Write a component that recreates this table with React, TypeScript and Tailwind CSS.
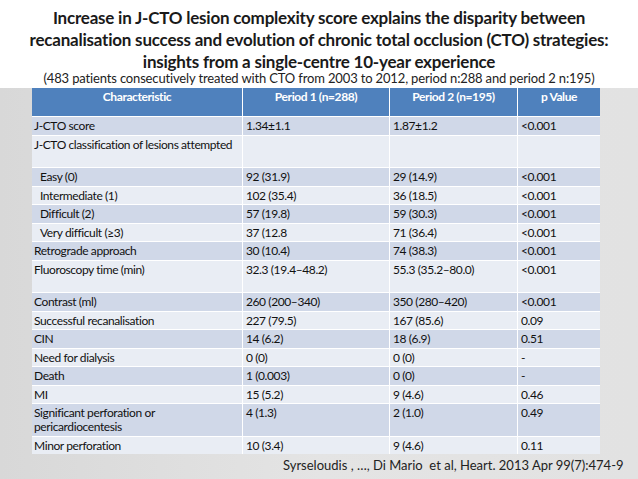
const rows: { label: string; p1: string; p2: string; p: string; indent?: boolean; tall?: boolean }[] = [
  { label: 'J-CTO score', p1: '1.34±1.1', p2: '1.87±1.2', p: '<0.001' },
  { label: 'J-CTO classification of lesions attempted', p1: '', p2: '', p: '', tall: true },
  { label: 'Easy (0)', p1: '92 (31.9)', p2: '29 (14.9)', p: '<0.001', indent: true },
  { label: 'Intermediate (1)', p1: '102 (35.4)', p2: '36 (18.5)', p: '<0.001', indent: true },
  { label: 'Difficult (2)', p1: '57 (19.8)', p2: '59 (30.3)', p: '<0.001', indent: true },
  { label: 'Very difficult (≥3)', p1: '37 (12.8', p2: '71 (36.4)', p: '<0.001', indent: true },
  { label: 'Retrograde approach', p1: '30 (10.4)', p2: '74 (38.3)', p: '<0.001' },
  { label: 'Fluoroscopy time (min)', p1: '32.3 (19.4–48.2)', p2: '55.3 (35.2–80.0)', p: '<0.001', tall: true },
  { label: 'Contrast (ml)', p1: '260 (200–340)', p2: '350 (280–420)', p: '<0.001' },
  { label: 'Successful recanalisation', p1: '227 (79.5)', p2: '167 (85.6)', p: '0.09' },
  { label: 'CIN', p1: '14 (6.2)', p2: '18 (6.9)', p: '0.51' },
  { label: 'Need for dialysis', p1: '0 (0)', p2: '0 (0)', p: '-' },
  { label: 'Death', p1: '1 (0.003)', p2: '0 (0)', p: '-' },
  { label: 'MI', p1: '15 (5.2)', p2: '9 (4.6)', p: '0.46' },
  { label: 'Significant perforation or pericardiocentesis', p1: '4 (1.3)', p2: '2 (1.0)', p: '0.49', tall: true },
  { label: 'Minor perforation', p1: '10 (3.4)', p2: '9 (4.6)', p: '0.11' },
];

export default function App() {
  return (
    <div
      className="relative w-[638px] h-[479px] overflow-hidden bg-gradient-to-r from-[#d8d8d8] via-[#e4e4e4] to-[#e2e2e2] text-[#111]"
      style={{ fontFamily: 'Lato, "Open Sans", sans-serif' }}
    >
      {/* white title band */}
      <div className="bg-white h-[88px] flex flex-col items-center pt-[7px]">
        <h1 className="text-[17px] leading-[22px] font-bold text-center text-[#1a1a1a] tracking-[-0.22px]">
          Increase in J-CTO lesion complexity score explains the disparity between
          <br />
          recanalisation success and evolution of chronic total occlusion (CTO) strategies:
          <br />
          insights from a single-centre 10-year experience
        </h1>
        <p className="text-[13px] leading-[14px] mt-[-2px] text-[#222] tracking-[-0.15px]">
          (483 patients consecutively treated with CTO from 2003 to 2012, period n:288 and period 2 n:195)
        </p>
      </div>

      {/* table */}
      <div className="ml-[32px] w-[568px] grid grid-cols-[210px_146px_127px_82px] gap-px bg-white text-[12px] leading-[14px] tracking-[-0.4px]">
        <div className="bg-[#4f81bd] h-[28px] text-white font-bold text-center pt-[2px]">Characteristic</div>
        <div className="bg-[#4f81bd] h-[28px] text-white font-bold text-center pt-[2px]">Period 1 (n=288)</div>
        <div className="bg-[#4f81bd] h-[28px] text-white font-bold text-center pt-[2px]">Period 2 (n=195)</div>
        <div className="bg-[#4f81bd] h-[28px] text-white font-bold text-center pt-[2px]">p Value</div>
        {rows.map((r, i) => {
          const bg = i % 2 === 0 ? 'bg-[#d0d8e8]' : 'bg-[#e9edf4]';
          const h = r.tall ? 'h-[31.5px]' : 'h-[17.5px]';
          return [
            <div key={i + 'a'} className={`${bg} ${h} ${r.indent ? 'pl-[8px]' : 'pl-[2px]'} pt-[2px] ${r.label.startsWith('Significant') ? 'pr-[60px]' : ''}`}>
              {r.label}
            </div>,
            <div key={i + 'b'} className={`${bg} ${h} pl-[3px] pt-[2px]`}>{r.p1}</div>,
            <div key={i + 'c'} className={`${bg} ${h} pl-[3px] pt-[2px]`}>{r.p2}</div>,
            <div key={i + 'd'} className={`${bg} ${h} pl-[3px] pt-[2px]`}>{r.p}</div>,
          ];
        })}
      </div>

      {/* citation */}
      <div className="absolute left-[283px] top-[457px] text-[13px] leading-[16px] text-[#222] whitespace-pre">
        {'Syrseloudis , …, Di Mario  et al, Heart. 2013 Apr 99(7):474-9'}
      </div>
    </div>
  );
}
